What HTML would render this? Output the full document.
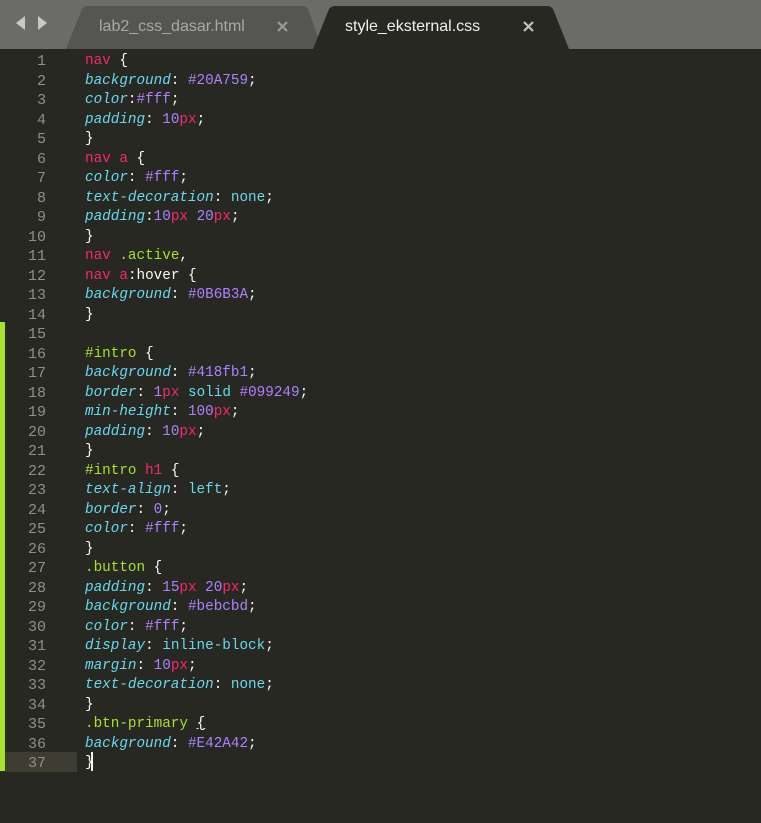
<!DOCTYPE html>
<html><head><meta charset="utf-8"><style>
body{margin:0;width:761px;height:823px;background:#272822;overflow:hidden;position:relative;font-family:"Liberation Mono",monospace;}
.bar{position:absolute;left:0;top:0;width:761px;height:49px;background:#6b6b68;}
.code{position:absolute;left:0;top:52px;font-size:14.3px;line-height:19.5px;color:#f8f8f2;}
.ln{position:absolute;left:0;width:46px;text-align:right;color:#8f908a;font-size:15px;}
.tx{position:absolute;left:85px;white-space:pre;}
.t{color:#f92672}.g{color:#a6e22e}.p{color:#66d9ef;font-style:italic}.n{color:#ae81ff}.u{color:#f92672}.k{color:#66d9ef}
.tab{position:absolute;font-family:"Liberation Sans",sans-serif;font-size:16px;}
</style></head><body>
<div class="bar"></div>
<svg style="position:absolute;left:0;top:0" width="761" height="49">
<polygon points="16,23 25,16 25,30" fill="#c8c8c6"/><polygon points="38,16 47,23 38,30" fill="#c8c8c6"/>
<path d="M66,49 L82,9 Q84,6 88,6 L302,6 Q306,6 308,9 L322,49 Z" fill="#555553"/>
<path d="M313,49 L329,9 Q331,6 335,6 L547,6 Q551,6 553,9 L569,49 Z" fill="#272822"/>
<path d="M278,22 L287,31 M287,22 L278,31" stroke="#9a9a98" stroke-width="2.2"/>
<path d="M524,22 L533,31 M533,22 L524,31" stroke="#c0c0be" stroke-width="2.2"/>
</svg>
<div class="tab" style="left:99px;top:18px;color:#a8a8a6">lab2_css_dasar.html</div>
<div class="tab" style="left:345px;top:18px;color:#f0f0f0">style_eksternal.css</div>
<div style="position:absolute;left:0;top:322px;width:5px;height:449px;background:#a6e22e"></div>
<div style="position:absolute;left:5px;top:752px;width:72px;height:19.5px;background:#3e3d32"></div>
<div style="position:absolute;left:91px;top:752px;width:2px;height:19px;background:#f8f8f0"></div>
<div class="code" id="c"></div>
<script>
var L=[
'<span class=t>nav</span> {',
'<span class=p>background</span>: <span class=n>#20A759</span>;',
'<span class=p>color</span>:<span class=n>#fff</span>;',
'<span class=p>padding</span>: <span class=n>10</span><span class=u>px</span>;',
'}',
'<span class=t>nav</span> <span class=t>a</span> {',
'<span class=p>color</span>: <span class=n>#fff</span>;',
'<span class=p>text-decoration</span>: <span class=k>none</span>;',
'<span class=p>padding</span>:<span class=n>10</span><span class=u>px</span> <span class=n>20</span><span class=u>px</span>;',
'}',
'<span class=t>nav</span> <span class=g>.active</span>,',
'<span class=t>nav</span> <span class=t>a</span>:hover {',
'<span class=p>background</span>: <span class=n>#0B6B3A</span>;',
'}',
'',
'<span class=g>#intro</span> {',
'<span class=p>background</span>: <span class=n>#418fb1</span>;',
'<span class=p>border</span>: <span class=n>1</span><span class=u>px</span> <span class=k>solid</span> <span class=n>#099249</span>;',
'<span class=p>min-height</span>: <span class=n>100</span><span class=u>px</span>;',
'<span class=p>padding</span>: <span class=n>10</span><span class=u>px</span>;',
'}',
'<span class=g>#intro</span> <span class=t>h1</span> {',
'<span class=p>text-align</span>: <span class=k>left</span>;',
'<span class=p>border</span>: <span class=n>0</span>;',
'<span class=p>color</span>: <span class=n>#fff</span>;',
'}',
'<span class=g>.button</span> {',
'<span class=p>padding</span>: <span class=n>15</span><span class=u>px</span> <span class=n>20</span><span class=u>px</span>;',
'<span class=p>background</span>: <span class=n>#bebcbd</span>;',
'<span class=p>color</span>: <span class=n>#fff</span>;',
'<span class=p>display</span>: <span class=k>inline-block</span>;',
'<span class=p>margin</span>: <span class=n>10</span><span class=u>px</span>;',
'<span class=p>text-decoration</span>: <span class=k>none</span>;',
'}',
'<span class=g>.btn-primary</span> <u>{</u>',
'<span class=p>background</span>: <span class=n>#E42A42</span>;',
'}'];
var h='';for(var i=0;i<L.length;i++){var y=i*19.5;h+='<div class=ln style="top:'+y+'px">'+(i+1)+'</div><div class=tx style="top:'+y+'px">'+L[i]+'</div>';}
document.getElementById('c').innerHTML=h;
</script>
</body></html>
